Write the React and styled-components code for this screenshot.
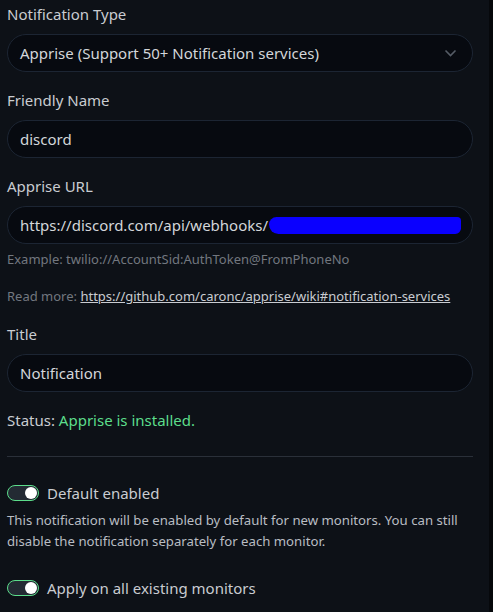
import React, { useState } from 'react';
import styled, { createGlobalStyle } from 'styled-components';

const GlobalStyle = createGlobalStyle`
  html, body {
    margin: 0;
    padding: 0;
    background: #0d1117;
  }
  body {
    font-family: "Noto Sans", "Liberation Sans", sans-serif;
    color: #c9ccd1;
  }
`;

const Page = styled.div`
  display: flex;
  min-height: 612px;
  background: #0d1117;
`;

const Form = styled.div`
  flex: 1;
  min-width: 0;
  padding: 2px 16px 20px 7px;
`;

const Scrollbar = styled.div`
  width: 4px;
  background: #06080b;
`;

const Field = styled.div`
  margin-bottom: 16px;
`;

const Label = styled.label`
  display: block;
  font-size: 15px;
  line-height: 24px;
  margin-bottom: 8px;
  color: #c9ccd1;
`;

const InputBox = styled.div`
  position: relative;
  display: flex;
  align-items: center;
  height: 38px;
  box-sizing: border-box;
  padding: 0 40px 0 12px;
  border: 1px solid #1c2533;
  border-radius: 19px;
  background: #070a10;
  font-size: 15px;
  color: #d3d6da;
  overflow: hidden;
  white-space: nowrap;
`;

const Chevron = styled.svg`
  position: absolute;
  right: 15px;
  top: 13px;
`;

const Redact = styled.span`
  display: inline-block;
  flex: none;
  width: 192px;
  height: 17px;
  margin-left: 1px;
  background: #0a00ff;
  border-radius: 8px 4px 6px 10px;
`;

const HelpText = styled.div`
  font-size: 13px;
  line-height: 20px;
  color: #72777f;
  margin-top: ${({ $top }) => $top || 0}px;
`;

const Link = styled.a`
  color: #c9ccd1;
  text-decoration: underline;
`;

const Status = styled.div`
  font-size: 15px;
  line-height: 24px;
  color: #c9ccd1;
`;

const Ok = styled.span`
  color: #5cdd8b;
`;

const Divider = styled.hr`
  border: 0;
  border-top: 1px solid #2a3039;
  margin: 24px 0 24px;
`;

const SwitchRow = styled.div`
  display: flex;
  align-items: center;
  gap: 8px;
  height: 24px;
`;

const Track = styled.button`
  position: relative;
  width: 32px;
  height: 16px;
  padding: 0;
  border: 1px solid #5cdd8b;
  border-radius: 8px;
  background: #232a33;
  cursor: pointer;
`;

const Knob = styled.span`
  position: absolute;
  top: 1px;
  left: ${({ $on }) => ($on ? '17px' : '1px')};
  width: 12px;
  height: 12px;
  border-radius: 50%;
  background: #fff;
`;

const SwitchLabel = styled.span`
  font-size: 15px;
  color: #c9ccd1;
`;

const Description = styled.div`
  font-size: 13.2px;
  line-height: 21px;
  color: #b9bdc3;
  margin: 5px 0 24px;
`;

const Switch = ({ label }) => {
  const [on, setOn] = useState(true);
  return (
    <SwitchRow>
      <Track onClick={() => setOn(!on)}>
        <Knob $on={on} />
      </Track>
      <SwitchLabel>{label}</SwitchLabel>
    </SwitchRow>
  );
};

const App = () => (
  <>
    <GlobalStyle />
    <Page>
      <Form>
        <Field>
          <Label>Notification Type</Label>
          <InputBox>
            Apprise (Support 50+ Notification services)
            <Chevron width="13" height="10" viewBox="0 0 13 10">
              <path d="M1.5 2.5 L6.5 7.5 L11.5 2.5" fill="none" stroke="#555c66" strokeWidth="1.6" />
            </Chevron>
          </InputBox>
        </Field>
        <Field>
          <Label>Friendly Name</Label>
          <InputBox>discord</InputBox>
        </Field>
        <Field>
          <Label>Apprise URL</Label>
          <InputBox>
            https://discord.com/api/webhooks/<Redact />
          </InputBox>
          <HelpText $top={5}>Example: twilio://AccountSid:AuthToken@FromPhoneNo</HelpText>
          <HelpText $top={17}>
            Read more: <Link href="#">https://github.com/caronc/apprise/wiki#notification-services</Link>
          </HelpText>
        </Field>
        <Field>
          <Label>Title</Label>
          <InputBox>Notification</InputBox>
        </Field>
        <Status>
          Status: <Ok>Apprise is installed.</Ok>
        </Status>
        <Divider />
        <Switch label="Default enabled" />
        <Description>
          This notification will be enabled by default for new monitors. You can still disable the
          notification separately for each monitor.
        </Description>
        <Switch label="Apply on all existing monitors" />
      </Form>
      <Scrollbar />
    </Page>
  </>
);

export default App;
